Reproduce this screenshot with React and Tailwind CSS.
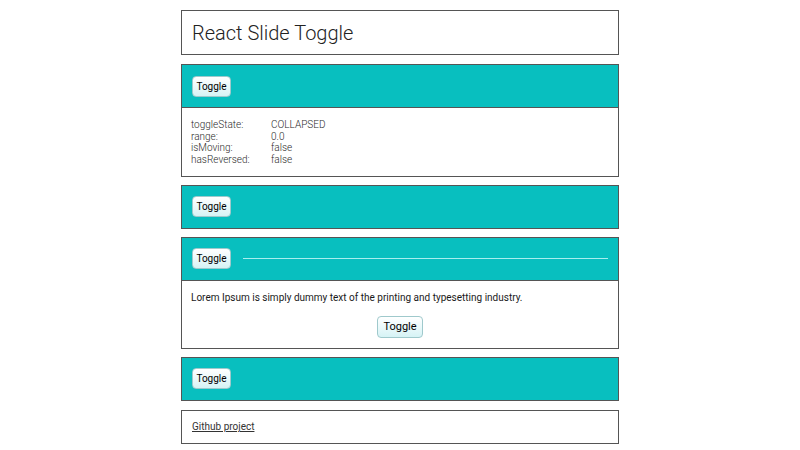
import React from 'react';

const font = { fontFamily: 'Roboto, "Noto Sans", sans-serif' };

const ToggleButton = ({ big }) => (
    <button
        className={`rounded-[4px] border border-[#9fc9cc] bg-gradient-to-b from-white to-[#d6f3f5] text-black ${big ? 'h-[22px] w-[46px] text-[11px]' : 'h-[21px] w-[39px] text-[10px]'}`}
    >
        Toggle
    </button>
);

const Header = ({ line }) => (
    <div className="flex items-center h-[42px] px-[10px] bg-[#08bfbf]">
        <ToggleButton />
        {line && <div className="ml-[12px] flex-1 h-[1px] bg-[#a8eeee]" />}
    </div>
);

const App = () => {
    const rows = [
        ['toggleState:', 'COLLAPSED'],
        ['range:', '0.0'],
        ['isMoving:', 'false'],
        ['hasReversed:', 'false'],
    ];

    return (
        <div className="min-h-[450px] bg-white pt-[10px]" style={font}>
            <div className="w-[438px] mx-auto flex flex-col gap-[8px]">
                <div className="border border-[#555] h-[45px] mb-[1px] flex items-center px-[10px]">
                    <h1 className="text-[20px] font-light text-[#222]">React Slide Toggle</h1>
                </div>

                <div className="border border-[#555]">
                    <Header />
                    <div className="border-t border-[#555] px-[9px] pt-[11px] pb-[10px] text-[10px] leading-[11.7px] font-light text-[#2a2a2a]">
                        {rows.map(([k, v]) => (
                            <div key={k} className="flex">
                                <span className="w-[80px]">{k}</span>
                                <span>{v}</span>
                            </div>
                        ))}
                    </div>
                </div>

                <div className="border border-[#555]">
                    <Header />
                </div>

                <div className="border border-[#555]">
                    <Header line />
                    <div className="border-t border-[#555] px-[9px] pt-[11px] pb-[10px] text-[10px] text-[#1a1a1a]">
                        <p className="leading-[12px]">Lorem Ipsum is simply dummy text of the printing and typesetting industry.</p>
                        <div className="flex justify-center mt-[12px]">
                            <ToggleButton big />
                        </div>
                    </div>
                </div>

                <div className="border border-[#555]">
                    <Header />
                </div>

                <div className="border border-[#555] h-[34px] mt-[1px] flex items-center px-[10px]">
                    <a href="#" className="text-[10px] underline text-[#333]">Github project</a>
                </div>
            </div>
        </div>
    );
};

export default App;
